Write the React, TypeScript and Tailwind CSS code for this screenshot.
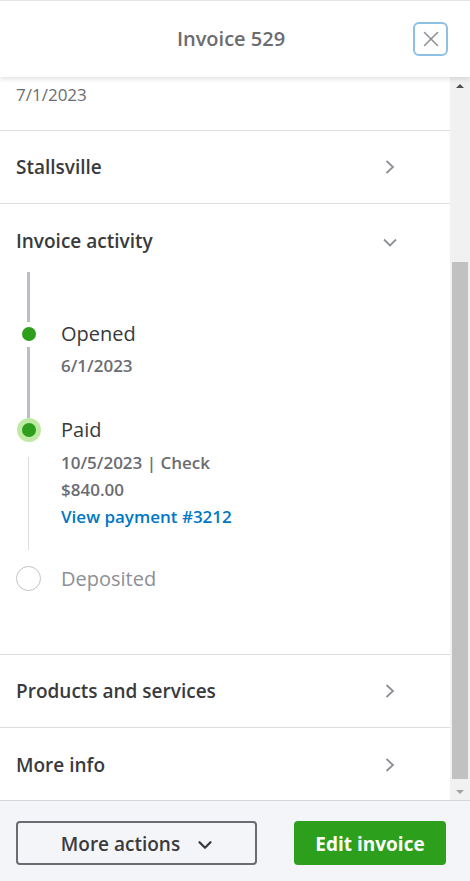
import { ChevronDown, X } from 'lucide-react'

const font = { fontFamily: '"Open Sans", "Liberation Sans", sans-serif' }

function ChevRight() {
  return (
    <svg width="10" height="14" viewBox="0 0 10 14" fill="none" className="text-[#8d9096]">
      <path d="M1.5 1 8 7l-6.5 6" stroke="currentColor" strokeWidth="1.8" />
    </svg>
  )
}

function ChevDown() {
  return (
    <svg width="14" height="9" viewBox="0 0 14 9" fill="none" className="text-[#8d9096]">
      <path d="M1 1.5 7 7.5l6-6" stroke="currentColor" strokeWidth="1.8" />
    </svg>
  )
}

function NavRow({ label, last }: { label: string; last?: boolean }) {
  return (
    <div
      className={
        'flex h-[73px] items-center justify-between pl-4 pr-[55px] ' +
        (last ? '' : 'border-b border-[#dcdde0]')
      }
    >
      <span className="text-[19px] font-[550] leading-6 text-[#393a3d]">{label}</span>
      <ChevRight />
    </div>
  )
}

function Timeline() {
  return (
    <div className="pl-4">
      {/* top connector */}
      <div className="flex h-[50px] w-[25px] justify-center">
        <div className="w-[3px] bg-[#babec5]" />
      </div>

      {/* Opened */}
      <div className="flex">
        <div className="flex w-[25px] flex-col items-center pt-[5px]">
          <div className="h-[14px] w-[14px] rounded-full bg-[#2ca01c]" />
          <div className="mt-[6px] w-[3px] flex-1 bg-[#babec5]" />
        </div>
        <div className="ml-5 pb-[42px]">
          <div className="text-[20px] font-[450] leading-6 text-[#393a3d]">Opened</div>
          <div className="mt-[10px] text-[17px] font-semibold leading-5 text-[#6b6c72]">6/1/2023</div>
        </div>
      </div>

      {/* Paid */}
      <div className="flex">
        <div className="flex w-[25px] flex-col items-center">
          <div className="flex h-[24px] w-[24px] items-center justify-center rounded-full bg-[#bfeaa3]">
            <div className="h-[14px] w-[14px] rounded-full bg-[#2ca01c]" />
          </div>
          <div className="mt-[15px] h-[93px] w-px bg-[#dcdde0]" />
        </div>
        <div className="ml-5 pb-[36px]">
          <div className="text-[20px] font-[450] leading-6 text-[#393a3d]">Paid</div>
          <div className="mt-[7px] text-[17px] font-semibold leading-[27px] text-[#6b6c72]">
            <div>10/5/2023 | Check</div>
            <div>$840.00</div>
            <div className="text-[#0077c5]">View payment #3212</div>
          </div>
        </div>
      </div>

      {/* Deposited */}
      <div className="flex pb-[63px]">
        <div className="h-[25px] w-[25px] rounded-full border border-[#c1c4c9] bg-white" />
        <div className="ml-5 text-[20px] leading-[25px] text-[#8d9096]">Deposited</div>
      </div>
    </div>
  )
}

function Scrollbar() {
  return (
    <div className="flex w-5 flex-col bg-[#f1f1f1]">
      <div className="flex h-[17px] items-center justify-center">
        <div className="h-0 w-0 border-x-[4px] border-b-[4px] border-x-transparent border-b-[#505050]" />
      </div>
      <div className="flex-1 px-[2px] pt-[168px] pb-[4px]">
        <div className="h-full bg-[#c1c1c1]" />
      </div>
      <div className="flex h-[17px] items-center justify-center">
        <div className="h-0 w-0 border-x-[4px] border-t-[4px] border-x-transparent border-t-[#a3a3a3]" />
      </div>
    </div>
  )
}

export default function App() {
  return (
    <div className="flex h-[881px] w-[470px] flex-col overflow-hidden bg-white" style={font}>
      <header className="relative z-10 flex h-[77px] shrink-0 items-center border-t border-[#e3e5e8] bg-white shadow-[0_2px_5px_rgba(0,0,0,0.12)]">
        <div className="w-[52px]" />
        <h1 className="flex-1 text-center text-[20px] font-semibold text-[#6b6c72]">Invoice 529</h1>
        <div className="w-[60px] pl-[3px]">
          <button className="flex h-[34px] w-[35px] items-center justify-center rounded-[6px] border-2 border-[#8ec0e6] bg-white">
            <X size={26} strokeWidth={1.4} className="text-[#8d9096]" />
          </button>
        </div>
      </header>

      <div className="flex min-h-0 flex-1">
        <main className="flex-1 overflow-hidden">
          <div className="h-[54px] border-b border-[#dcdde0] pl-4 pt-[6px]">
            <span className="text-[17px] leading-6 text-[#6b6c72]">7/1/2023</span>
          </div>
          <NavRow label="Stallsville" />
          <div className="border-b border-[#dcdde0]">
            <div className="flex h-[68px] items-start justify-between pl-4 pr-[53px] pt-[25px]">
              <span className="text-[19px] font-[550] leading-6 text-[#393a3d]">Invoice activity</span>
              <div className="pt-[9px]">
                <ChevDown />
              </div>
            </div>
            <Timeline />
          </div>
          <NavRow label="Products and services" />
          <NavRow label="More info" last />
        </main>
        <Scrollbar />
      </div>

      <footer className="flex h-[81px] shrink-0 items-start justify-between border-t border-[#d4d7dc] bg-[#f4f5f8] pl-4 pr-6 pt-5">
        <button className="flex h-[44px] w-[241px] items-center justify-center gap-[14px] rounded-[4px] border-2 border-[#6b6c72] bg-transparent pl-[4px] pt-[3px]">
          <span className="text-[19px] font-semibold text-[#393a3d]">More actions</span>
          <ChevronDown size={22} strokeWidth={2.5} className="text-[#393a3d]" />
        </button>
        <button className="flex h-[44px] w-[152px] items-center justify-center rounded-[4px] bg-[#2ca01c] pt-[3px]">
          <span className="text-[19px] font-bold text-white">Edit invoice</span>
        </button>
      </footer>
    </div>
  )
}
